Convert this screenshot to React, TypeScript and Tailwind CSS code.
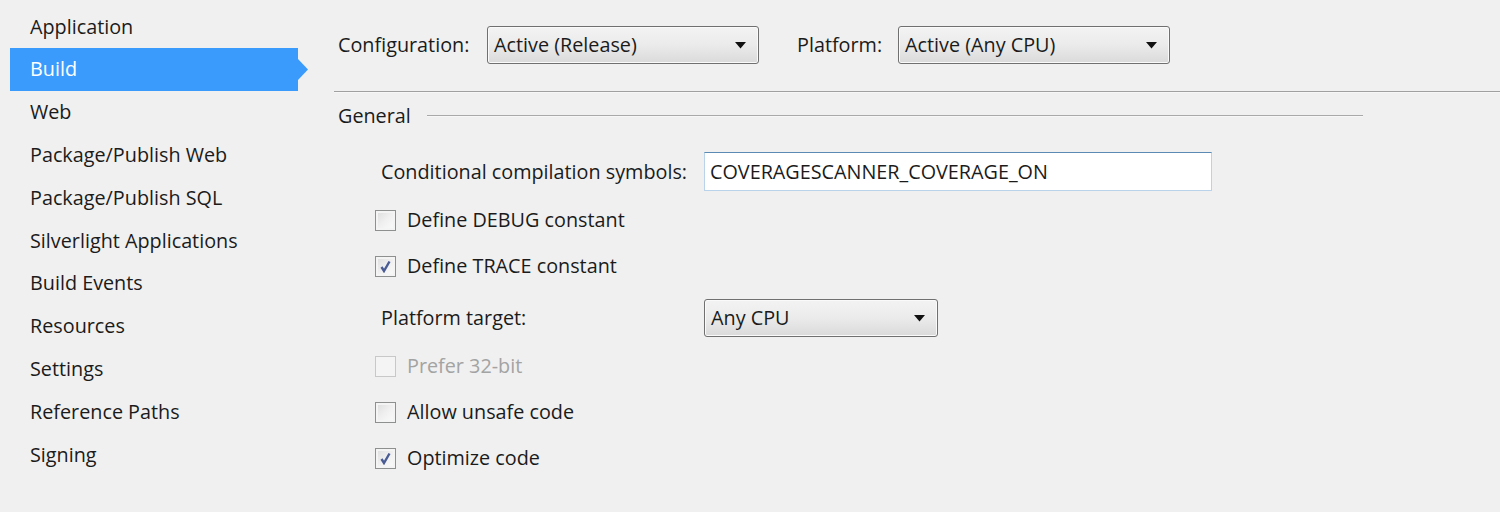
import React from "react"

const navItems = [
  "Application",
  "Build",
  "Web",
  "Package/Publish Web",
  "Package/Publish SQL",
  "Silverlight Applications",
  "Build Events",
  "Resources",
  "Settings",
  "Reference Paths",
  "Signing",
]

function Dropdown({ value, width }: { value: string; width: string }) {
  return (
    <div
      className={`${width} h-[38px] flex items-center justify-between rounded-[3px] border border-[#707070] bg-gradient-to-b from-[#f3f3f3] via-[#ebebeb] to-[#dadada] pl-[6px] pr-[12px] shadow-[inset_0_0_0_1px_#fafafa]`}
    >
      <span>{value}</span>
      <svg width="11" height="7" viewBox="0 0 11 7">
        <path d="M0 0 H11 L5.5 6.5 Z" fill="#111" />
      </svg>
    </div>
  )
}

function Checkbox({ label, checked, disabled }: { label: string; checked?: boolean; disabled?: boolean }) {
  return (
    <div className="h-[46px] flex items-center">
      <div
        className={`w-[21px] h-[21px] border flex items-center justify-center ${
          disabled
            ? "border-[#c8c8c8] bg-[#f4f4f4]"
            : "border-[#8e8f8f] bg-gradient-to-br from-[#dcdcdc] via-[#f0f0f0] to-[#fbfbfb] shadow-[inset_0_0_0_2px_#f4f4f4]"
        }`}
      >
        {checked && (
          <svg width="13" height="13" viewBox="0 0 13 13">
            <path d="M2.5 7 L5 11 L10.5 1.5" fill="none" stroke="#4a5c94" strokeWidth="2.4" />
          </svg>
        )}
      </div>
      <span className={`ml-[11px] ${disabled ? "text-[#a3a3a3]" : ""}`}>{label}</span>
    </div>
  )
}

export default function App() {
  return (
    <div
      className="w-[1500px] h-[512px] bg-[#f0f0f0] text-[#1b1b1b] text-[19.8px] flex overflow-hidden"
      style={{ fontFamily: '"Open Sans", "Noto Sans", sans-serif' }}
    >
      {/* left nav */}
      <div className="w-[334px] shrink-0 pt-[5px] pl-[10px]">
        {navItems.map((item) => {
          const active = item === "Build"
          return (
            <div key={item} className="relative h-[42.8px] w-[288px]">
              <div
                className={`h-full flex items-center pl-[20px] ${active ? "bg-[#3a9bfc] text-white" : ""}`}
              >
                {item}
              </div>
              {active && (
                <svg className="absolute left-[288px] top-[11px]" width="11" height="21" viewBox="0 0 11 21">
                  <path d="M0 0 L10 10.5 L0 21 Z" fill="#3a9bfc" />
                </svg>
              )}
            </div>
          )
        })}
      </div>

      {/* main */}
      <div className="flex-1 flex flex-col">
        <div className="pt-[26px] pl-[4px] flex items-center">
          <span className="w-[149px]">Configuration:</span>
          <Dropdown value="Active (Release)" width="w-[272px]" />
          <span className="ml-[38px] w-[101px]">Platform:</span>
          <Dropdown value="Active (Any CPU)" width="w-[272px]" />
        </div>

        <div className="mt-[27px] h-[2px] border-t border-[#a0a0a0] border-b-0 bg-[#f7f7f7]" />

        <div className="mt-[11px] h-[24px] w-[1029px] pl-[4px] flex items-center">
          <span>General</span>
          <div className="ml-[16px] flex-1 h-[2px] border-t border-[#a9a9a9] bg-[#f7f7f7]" />
        </div>

        <div className="pl-[41px] flex flex-col">
          <div className="mt-[24px] h-[39px] flex items-center">
            <span className="ml-[6px] w-[323px]">Conditional compilation symbols:</span>
            <div className="w-[508px] h-[39px] flex items-center bg-white border border-[#b8d3ea] border-t-[#5b8ab5] pl-[5px]">
              COVERAGESCANNER_COVERAGE_ON
            </div>
          </div>

          <div className="mt-[6px]">
            <Checkbox label="Define DEBUG constant" />
            <Checkbox label="Define TRACE constant" checked />
          </div>

          <div className="mt-[10px] h-[38px] flex items-center">
            <span className="ml-[6px] w-[323px]">Platform target:</span>
            <Dropdown value="Any CPU" width="w-[234px]" />
          </div>

          <div className="mt-[6px]">
            <Checkbox label="Prefer 32-bit" disabled />
            <Checkbox label="Allow unsafe code" />
            <Checkbox label="Optimize code" checked />
          </div>
        </div>
      </div>
    </div>
  )
}
